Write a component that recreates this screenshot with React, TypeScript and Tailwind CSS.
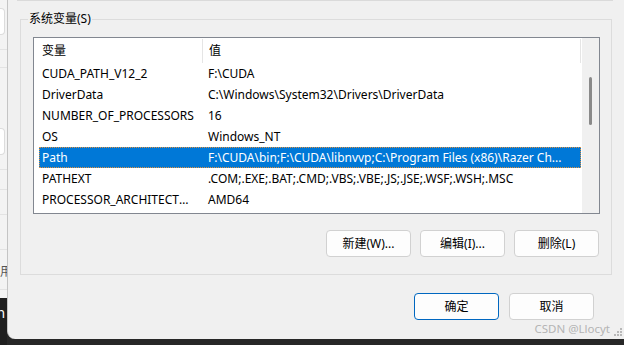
const rows = [
  ["CUDA_PATH_V12_2", "F:\\CUDA"],
  ["DriverData", "C:\\Windows\\System32\\Drivers\\DriverData"],
  ["NUMBER_OF_PROCESSORS", "16"],
  ["OS", "Windows_NT"],
  ["Path", "F:\\CUDA\\bin;F:\\CUDA\\libnvvp;C:\\Program Files (x86)\\Razer Ch..."],
  ["PATHEXT", ".COM;.EXE;.BAT;.CMD;.VBS;.VBE;.JS;.JSE;.WSF;.WSH;.MSC"],
  ["PROCESSOR_ARCHITECTURE", "AMD64"],
];

function BackWindow() {
  return (
    <div className="flex w-[7px] flex-col overflow-hidden">
      <div className="flex h-[298px] flex-col bg-[#f3f3f3]">
        <div className="mt-[8px] h-[27px] w-[5px] rounded-r-[4px] border border-l-0 border-[#dcdcdc] bg-white" />
        <div className="mt-[14px] h-px bg-[#e3e3e3]" />
        <div className="mt-[17px] h-px bg-[#e3e3e3]" />
        <div className="mt-[60px] h-[27px] w-[5px] rounded-r-[4px] border border-l-0 border-[#dcdcdc] bg-white" />
        <div className="mt-[14px] h-px bg-[#e3e3e3]" />
        <div className="mt-[19px] h-px bg-[#e3e3e3]" />
        <div className="mt-[24px] h-px bg-[#e3e3e3]" />
        <div className="mt-[34px] h-px bg-[#e3e3e3]" />
        <div className="mt-[15px] -ml-[12px] whitespace-nowrap leading-[14px] text-[#555]">应用(</div>
        <div className="mt-[10px] h-px bg-[#e3e3e3]" />
      </div>
      <div className="flex-1 bg-[#1f1f1f] pt-[6px]">
        <div className="-ml-[7px] whitespace-nowrap text-[14px] leading-[18px] text-white">in</div>
      </div>
    </div>
  );
}

function Btn({ label, primary }: { label: string; primary?: boolean }) {
  return (
    <button
      className={
        primary
          ? "flex h-[27px] w-[85px] items-center justify-center rounded-[4px] border border-[#0067c0] bg-[#fdfdfd] text-[12px] text-black"
          : "flex h-[27px] w-[85px] items-center justify-center rounded-[4px] border border-[#d1d1d1] bg-[#fdfdfd] text-[12px] text-black"
      }
    >
      {label}
    </button>
  );
}

export default function App() {
  return (
    <div className="relative flex h-[345px] w-[624px] overflow-hidden bg-[#272727] font-['Noto_Sans','Noto_Sans_CJK_SC',sans-serif] text-[12px] text-black">
      <BackWindow />
      <div className="relative flex h-[339px] flex-1 flex-col rounded-bl-[8px] border-l border-[#c4c4c4] bg-[#f0f0f0]">
        <div className="ml-[9px] h-px w-[596px] bg-[#dadada]" />

        <div className="relative ml-[12px] mt-[18px] h-[256px] w-[592px] border border-[#dcdcdc]">
          <span className="absolute -top-[8px] left-[7px] bg-[#f0f0f0] px-[1px] leading-[14px]">系统变量(S)</span>

          <div className="ml-[12px] mt-[17px] flex h-[177px] w-[567px] border border-[#828790] bg-white">
            <div className="flex flex-1 flex-col">
              <div className="flex h-[25px] items-center">
                <div className="flex h-[24px] w-[169px] items-center border-r border-[#e5e5e5] pl-[8px]">变量</div>
                <div className="flex h-[24px] w-[378px] items-center border-r border-[#e5e5e5] pl-[6px]">值</div>
              </div>
              {rows.map(([name, value]) => (
                <div
                  key={name}
                  className={
                    name === "Path"
                      ? "ml-[5px] flex h-[21px] w-[542px] items-center border border-dotted border-[#e0913f] bg-[#0078d7] text-white"
                      : "ml-[5px] flex h-[21px] w-[542px] items-center border border-transparent"
                  }
                >
                  <div className="w-[163px] truncate pl-[2px] pr-[6px]">{name}</div>
                  <div className="flex-1 truncate pl-[5px] pr-[2px]">{value}</div>
                </div>
              ))}
            </div>
            <div className="flex w-[17px] flex-col bg-[#f0f0f0] pt-[39px]">
              <div className="mx-auto h-[48px] w-[3px] rounded-full bg-[#8a8a8a]" />
            </div>
          </div>

          <div className="mt-[16px] flex justify-end gap-[9px] pr-[12px]">
            <Btn label="新建(W)..." />
            <Btn label="编辑(I)..." />
            <Btn label="删除(L)" />
          </div>
        </div>

        <div className="mt-[18px] flex justify-end gap-[10px] pr-[30px]">
          <Btn label="确定" primary />
          <Btn label="取消" />
        </div>

        <span className="absolute bottom-[3px] right-[14px] text-[11.5px] leading-[14px] text-[#b4b4b4]">CSDN @Llocyt</span>
        <svg className="absolute bottom-[3px] right-[2px]" width="9" height="9" viewBox="0 0 9 9">
          <rect x="7" y="1" width="2" height="2" fill="#b8b8b8" />
          <rect x="4" y="4" width="2" height="2" fill="#b8b8b8" />
          <rect x="7" y="4" width="2" height="2" fill="#b8b8b8" />
          <rect x="1" y="7" width="2" height="2" fill="#b8b8b8" />
          <rect x="4" y="7" width="2" height="2" fill="#b8b8b8" />
          <rect x="7" y="7" width="2" height="2" fill="#b8b8b8" />
        </svg>
      </div>
    </div>
  );
}
